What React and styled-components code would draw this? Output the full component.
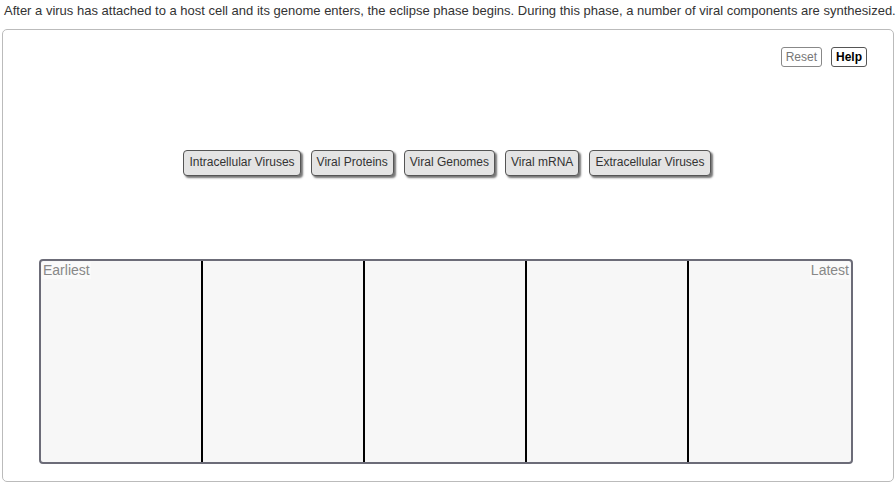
import styled, { createGlobalStyle } from 'styled-components';

const GlobalStyle = createGlobalStyle`
    body {
        margin: 0;
        background: #fff;
        font-family: "Liberation Sans", Arial, sans-serif;
    }
`

const Page = styled.div`
    padding: 0 2px;
    width: 892px;
`

const Prompt = styled.p`
    margin: 0;
    padding: 3px 2px 0 2px;
    height: 29px;
    box-sizing: border-box;
    font-size: 13px;
    line-height: 16px;
    color: #333;
    white-space: nowrap;
`

const Panel = styled.div`
    box-sizing: border-box;
    width: 892px;
    height: 453px;
    border: 1px solid #bbb;
    border-radius: 5px;
    padding: 17px 26px 0 36px;
    display: flex;
    flex-direction: column;
`

const Toolbar = styled.div`
    display: flex;
    justify-content: flex-end;
    gap: 9px;
`

const ToolButton = styled.button`
    font-family: "Liberation Sans", Arial, sans-serif;
    font-size: 12px;
    font-weight: ${p => (p.$bold ? 700 : 400)};
    color: ${p => (p.$disabled ? '#777' : '#000')};
    background: #fff;
    border: 1px solid ${p => (p.$disabled ? '#888' : '#555')};
    border-radius: 3px;
    height: 20px;
    padding: 0 4px;
    line-height: 18px;
`

const Tokens = styled.div`
    display: flex;
    justify-content: center;
    gap: 10px;
    margin-top: 83px;
    padding-right: 12px;
`

const Token = styled.div`
    box-sizing: border-box;
    height: 26px;
    padding: 0 5px;
    font-size: 12px;
    line-height: 22px;
    color: #333;
    background: #e4e4e4;
    border: 1px solid #555;
    border-radius: 4px;
    box-shadow: 2px 2px 2px #777;
`

const Zone = styled.div`
    box-sizing: border-box;
    margin-top: 83px;
    width: 814px;
    height: 205px;
    border: 2px solid #6c6c78;
    border-radius: 4px;
    background: #f7f7f7;
    display: grid;
    grid-template-columns: repeat(5, 1fr);
    position: relative;
`

const Column = styled.div`
    border-left: ${p => (p.$first ? 'none' : '2px solid #000')};
    margin-left: ${p => (p.$first ? '0' : '-2px')};
`

const ZoneLabel = styled.span`
    position: absolute;
    top: 1px;
    ${p => (p.$right ? 'right: 1px;' : 'left: 1px;')}
    font-size: 14px;
    line-height: 17px;
    padding: 0 1px;
    color: #888;
    background: #fafafa;
`

const tokens = ['Intracellular Viruses', 'Viral Proteins', 'Viral Genomes', 'Viral mRNA', 'Extracellular Viruses'];

function App() {
    return (
        <Page>
            <GlobalStyle />
            <Prompt>
                After a virus has attached to a host cell and its genome enters, the eclipse phase begins. During this phase, a number of viral components are synthesized.
            </Prompt>
            <Panel>
                <Toolbar>
                    <ToolButton $disabled>Reset</ToolButton>
                    <ToolButton $bold>Help</ToolButton>
                </Toolbar>
                <Tokens>
                    {tokens.map(t => <Token key={t}>{t}</Token>)}
                </Tokens>
                <Zone>
                    {[0, 1, 2, 3, 4].map(i => <Column key={i} $first={i === 0} />)}
                    <ZoneLabel>Earliest</ZoneLabel>
                    <ZoneLabel $right>Latest</ZoneLabel>
                </Zone>
            </Panel>
        </Page>
    );
}

export default App;
